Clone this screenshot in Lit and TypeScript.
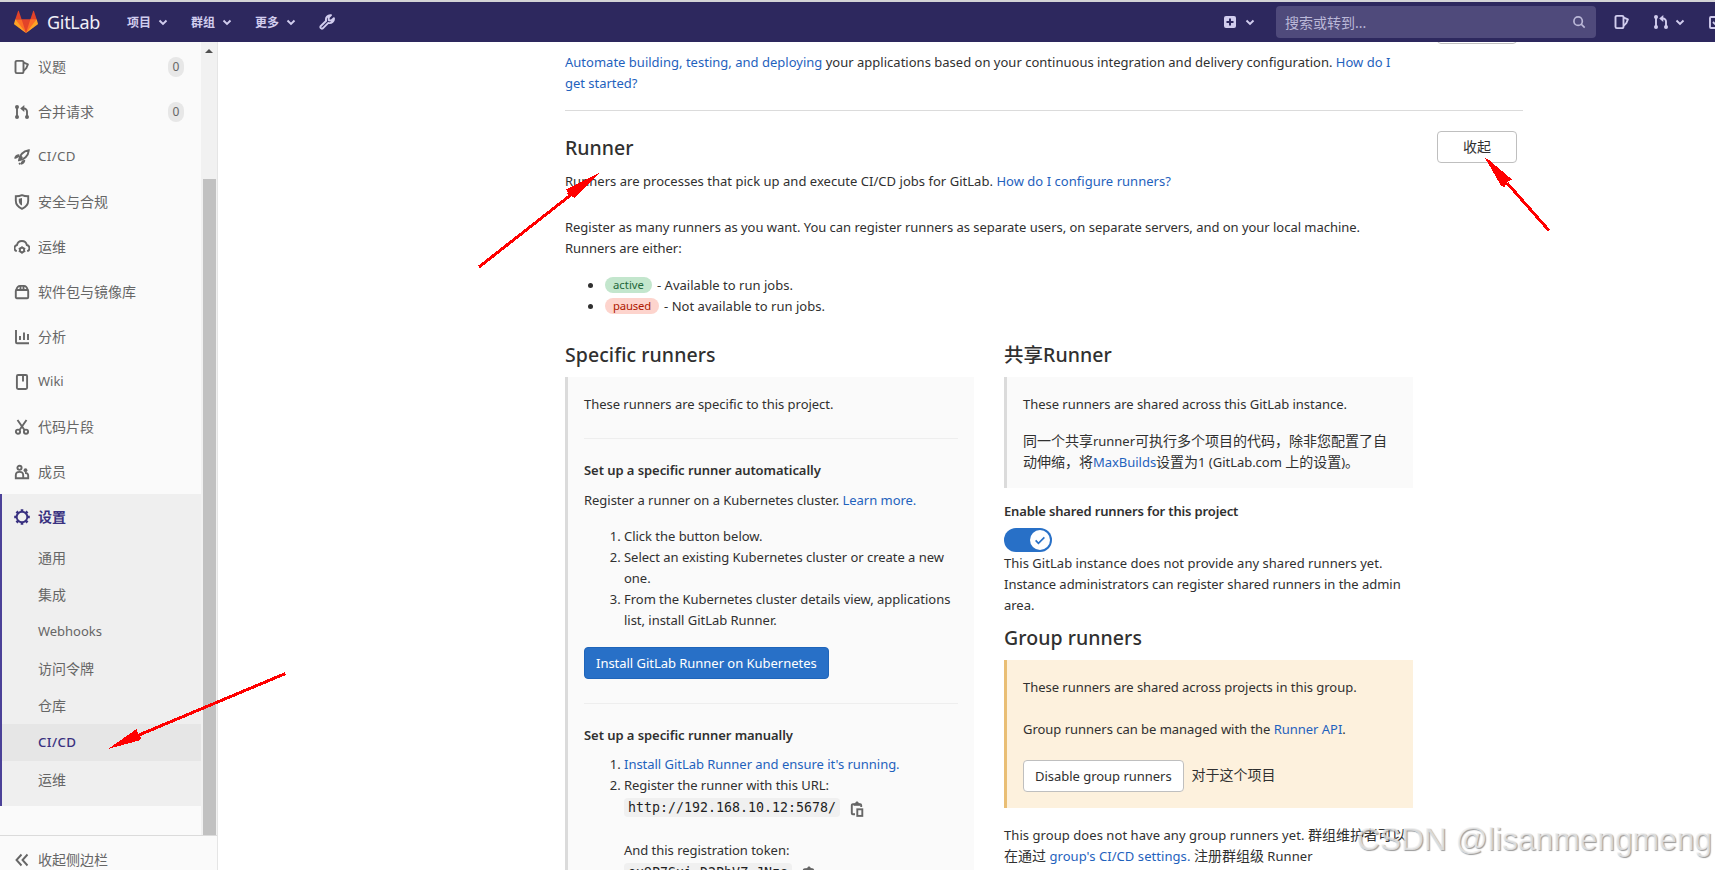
import { LitElement, html, svg, css } from "lit";
import { customElement } from "lit/decorators.js";

const icons: Record<string, unknown> = {
  issues: svg`<path d="M2.800 1.900h5.400a1.300 1.300 0 0 1 1.300 1.300v9.600a1.300 1.300 0 0 1-1.300 1.300H2.800a1.300 1.300 0 0 1-1.300-1.300V3.200a1.300 1.300 0 0 1 1.300-1.300z"/><path d="M9.800 3.600l4.100 1.700-1.600 3.900-2.500 2.500" stroke-linejoin="round"/>`,
  merge: svg`<circle class="f" cx="3" cy="3" r="2"/><circle class="f" cx="3" cy="13" r="2"/><circle class="f" cx="13" cy="13" r="2"/><path d="M3 3v10M13 13V7.500a3 3 0 0 0-3-3H8.500"/><path class="f" d="M10.300 1v7L6.200 4.500z"/>`,
  rocket: svg`<path d="M5 11.200C5.300 6.500 9 2 14.800 1.300 14.300 7 10 10.700 5 11.200zM8.300 7.700l-2.800 3"/><path class="f" d="M5.400 5.300C3 5 .6 6.600.100 9.500l1.700.3L5 8zM8.200 11.500l3-.8c.3 2-1 4.200-4 5l-.6-1.700zM5.500 13.500l1.400 1.200-1 1.200-1.500-1.200z"/>`,
  shield: svg`<path d="M8 1.200c2 .9 4 1.100 6.200 1.100v4.500c0 3.500-2.600 6.400-6.200 8-3.600-1.600-6.200-4.500-6.200-8V2.300C4 2.300 6 2.100 8 1.200z"/><path class="f" d="M8 4v7.600C5.800 10.400 4.800 8.800 4.800 7V4.700z"/>`,
  cloud: svg`<path d="M2.800 12.200A3.200 3.200 0 0 1 3 6a5 5 0 0 1 9.800 0 3.200 3.200 0 0 1 .4 6.200"/><circle cx="8" cy="11" r="2.200"/><path class="t" d="M8 7.300V9M8 13v1.800M4.700 9.200l1.400.8M11.300 9.200l-1.400.8M4.700 12.800l1.400-.8M11.300 12.800l-1.400-.8"/>`,
  box: svg`<rect x="1.800" y="6" width="12.400" height="8.200" rx="1"/><path d="M2.200 6.200C3 3.200 4.500 1.900 6 1.900h4c1.500 0 3 1.300 3.800 4.300M6.500 2v3.500M9.500 2v3.500"/>`,
  chart: svg`<path d="M2 1v12.200a1 1 0 0 0 1 1h12M6 7v4M10 3.500V11M14 5v6"/>`,
  wiki: svg`<rect x="2.900" y="1" width="10.200" height="14" rx="1.200"/><path d="M9 1v6.500"/>`,
  scissors: svg`<path d="M3.500 1l7 10M12.500 1l-7 10"/><circle cx="4" cy="12.700" r="2.100"/><circle cx="12" cy="12.700" r="2.100"/>`,
  users: svg`<circle cx="5.500" cy="3.800" r="2.100"/><path d="M1.800 14.200v-3c0-4.500 7.400-4.500 7.400 0v3zM9.500 14.200h4.700v-2.400c0-2-1.500-3-3.200-2.800"/><circle class="f" cx="11.500" cy="6.200" r="1.900"/>`,
  gear: svg`<circle cx="8" cy="8" r="5.300"/><path class="g" d="M8 .2v2.500M8 13.300v2.500M.2 8h2.500M13.300 8h2.500M2.500 2.500l1.800 1.800M11.700 11.700l1.800 1.800M13.500 2.500l-1.800 1.800M4.300 11.700l-1.800 1.800"/>`,
  collapse: svg`<path d="M7.500 2.500L2.500 8l5 5.500M13.500 2.500L8.500 8l5 5.500"/>`,
  chevron: svg`<path d="M4.500 6.500L8 10l3.500-3.500"/>`,
  wrench: svg`<path d="M12 1.200A4.300 4.300 0 0 0 7.200 6.800L1.600 12.200a1.600 1.600 0 0 0 2.200 2.200L9.300 8.900A4.300 4.300 0 0 0 14.900 4.100L12.300 6.500 9.800 6.200 9.600 3.700z" stroke-linejoin="round"/>`,
  plus: svg`<rect class="f" x="2" y="2" width="12" height="12" rx="2"/><path class="cut" d="M8 4.500v7M4.500 8h7"/>`,
  search: svg`<circle cx="7" cy="7" r="4.800"/><path d="M10.500 10.500l4 4"/>`,
  todo: svg`<path d="M13 8v5a1 1 0 0 1-1 1H3a1 1 0 0 1-1-1V4a1 1 0 0 1 1-1h6M5 8l2.500 2.500L14 4"/>`,
  copy: svg`<path d="M6 13.200H3.800a1 1 0 0 1-1-1V4.200a1 1 0 0 1 1-1h7.400a1 1 0 0 1 1 1V6"/><path class="f" d="M4.800 4.800V2.400h1.400C6.500-.2 9.500-.2 9.800 2.400h1.400v2.400z"/><rect x="8.300" y="8.300" width="5" height="6.600"/>`,
  check: svg`<path d="M3 8.500l3.200 3.200L13 5"/>`,
};
const icon = (n: string) => html`<svg class="ic" viewBox="0 0 16 16">${icons[n]}</svg>`;
const size = (s: string) => (s === "CI/CD" ? "abbr" : /^[\x00-\x7f]+$/.test(s) ? "" : "c");

const nav: [string, string, string?][] = [
  ["issues", "议题", "0"], ["merge", "合并请求", "0"], ["rocket", "CI/CD"], ["shield", "安全与合规"],
  ["cloud", "运维"], ["box", "软件包与镜像库"], ["chart", "分析"], ["wiki", "Wiki"],
  ["scissors", "代码片段"], ["users", "成员"],
];
const sub = ["通用", "集成", "Webhooks", "访问令牌", "仓库", "CI/CD", "运维"];

@customElement("app-root")
export class AppRoot extends LitElement {
  static styles = css`
    :host { display: block; position: relative; width: 1715px; height: 870px; overflow: hidden; background: #fff;
      font: 13px/21px "Noto Sans", "Noto Sans CJK SC", sans-serif; color: #303030; letter-spacing: -.03px; }
    * { box-sizing: border-box; }
    p, h3, h4, h5, ul, ol { margin: 0; padding: 0; font-weight: 400; }
    a { color: #1f62bd; text-decoration: none; }
    .c { font-size: 14px; letter-spacing: 0; }
    .abbr { letter-spacing: .4px; font-size: 13.300px; }
    .ic { width: 16px; height: 16px; flex: none; fill: none; stroke: currentColor; stroke-width: 1.9; display: block; }
    .ic .f { fill: currentColor; stroke: none; }
    .ic .t { stroke-width: 1.3; }
    .ic .g { stroke-width: 2.6; }
    .ic .cut { stroke: #2d285e; stroke-width: 2; }
    .top { height: 42px; border-top: 2px solid #d3d3d6; background: #2d285e; display: flex; align-items: center; color: #d1cdee; padding-left: 14px; }
    .logo { width: 24px; height: 24px; }
    .brand { font-size: 18px; color: #f0eff8; margin-left: 9px; width: 80px; letter-spacing: -.3px; }
    .menu { display: flex; align-items: center; width: 64px; font-size: 12px; font-weight: 700; gap: 4px; }
    .new { display: flex; gap: 4px; width: 54px; }
    .spacer { flex: 1; }
    .search { width: 320px; height: 32px; border-radius: 4px; background: #4f4a7b; display: flex; align-items: center; justify-content: space-between; padding: 0 10px 0 9px; color: #bbb8d8; }
    .search .ic { width: 14px; height: 14px; }
    .right { display: flex; align-items: center; width: 119px; padding-left: 18px; overflow: hidden; }
    .m { margin-left: 23px; } .n { margin-left: 3px; } .o { margin-left: 20px; }
    .body { display: flex; height: 828px; }
    .side { width: 218px; height: 828px; background: #fafafa; border-right: 1px solid #e5e5e5; display: flex; flex-direction: column; color: #666; }
    .scroll { display: flex; height: 793px; }
    .list { width: 201px; padding-top: 2px; }
    .item { height: 45px; display: flex; align-items: center; padding: 0 17px 0 14px; }
    .lbl { margin-left: 8px; flex: 1; white-space: nowrap; }
    .badge { width: 16px; height: 20px; border-radius: 8px; background: #e7e7e7; font-size: 12px; line-height: 20px; text-align: center; }
    .grp { background: #efefef; height: 312px; border-left: 2px solid #4b4198; }
    .grp .item { padding-left: 12px; color: #393180; font-weight: 700; }
    .sub { height: 37px; line-height: 37px; padding-left: 36px; }
    .sub.on { background: #e6e6e6; color: #393180; font-weight: 500; }
    .bar { width: 16px; background: #f1f1f1; display: flex; flex-direction: column; align-items: center; }
    .up { border: 4px solid transparent; border-top: 0; border-bottom: 4px solid #505050; margin-top: 7px; }
    .thumb { width: 13px; margin-top: 126px; flex: 1; background: #c1c1c1; }
    .foot { height: 35px; width: 217px; border-top: 1px solid #dbdbdb; display: flex; align-items: center; gap: 8px; padding: 13px 0 0 14px; }
    .main { margin-left: 347px; width: 958px; height: 828px; overflow: hidden; position: relative; }
    .ln { white-space: nowrap; display: block; height: 21px; padding-top: 1px; line-height: 20px; }
    .ln.k { padding-top: 0; line-height: 21px; }
    .ln.up1 { margin-top: -1px; height: 22px; padding-top: 0; line-height: 21px; }
    .auto { padding-top: 9px; height: 69px; border-bottom: 1px solid #dbdbdb; }
    .auto .ln, .proc, .reg .ln { line-height: 21px; }
    .wide1 { letter-spacing: .01px; }
    .wide2 { letter-spacing: .03px; }
    .wide3 { letter-spacing: .06px; }
    .head { display: flex; justify-content: space-between; padding: 20px 6px 0 0; height: 59px; }
    h4 { font-size: 19.500px; line-height: 24px; height: 24px; font-weight: 500; white-space: nowrap; letter-spacing: .06px; }
    .head h4 { padding-top: 5px; letter-spacing: 0; }
    .btn { border: 1px solid #bfbfbf; border-radius: 4px; background: #fff; height: 32px; line-height: 30px; padding: 0 11px; white-space: nowrap; display: block; width: fit-content; color: #303030; }
    .btn.w80 { width: 80px; text-align: center; padding: 0; }
    .btn.stub { width: 80px; position: absolute; right: 6px; top: -30px; }
    .reg { margin-top: 25px; }
    .tags { margin-top: 16px; list-style: none; letter-spacing: .02px; }
    .tags li { display: flex; align-items: center; height: 21px; padding: 1px 0 0 23px; }
    .dot { width: 5px; height: 5px; border-radius: 50%; background: #303030; margin-right: 12px; }
    .pill { font-size: 11.300px; line-height: 16px; height: 16px; border-radius: 8px; padding: 0 8px; margin-right: 5px; }
    .ok { background: #c3e6cd; color: #24663b; } .no { background: #fdd4cd; color: #ae1800; letter-spacing: -.15px; }
    .cols { display: flex; gap: 30px; margin-top: 27px; }
    .col { width: 409px; }
    .card { margin-top: 10px; background: #fafafa; border-left: 3px solid #dbdbdb; padding: 16px; }
    .c1 { height: 600px; }
    .rule { height: 1px; background: #eee; width: 374px; margin: 24px 0 21px; }
    h5 { font-size: 13px; font-weight: 600; line-height: 21px; white-space: nowrap; letter-spacing: -.06px; }
    .k8 { margin-top: 8px; }
    ol { padding-left: 40px; }
    .o1 { margin: 16px 0; } .o2 { margin-top: 8px; }
    ol .ln { padding-top: 0; line-height: 21px; }
    .blue { background: #2870c7; border-color: #1f65ba; color: #fff; }
    code { font: 13.290px/19px "DejaVu Sans Mono", monospace; letter-spacing: 0; background: #f0f0f0; border-radius: 4px; padding: 0 4px; height: 19px; color: #1f1f1f; white-space: nowrap; }
    .code { display: flex; align-items: center; gap: 9px; color: #666; height: 21px; padding-top: 2px; }
    .tok { margin-top: 23px; }
    .code .ic { margin-top: 2px; }
    .share { margin-top: 16px; }
    .en { margin-top: 13px; letter-spacing: -.15px; }
    .toggle { width: 48px; height: 24px; border-radius: 12px; background: #2870c7; display: flex; justify-content: flex-end; padding: 2px; margin-top: 6px; }
    .knob { width: 20px; height: 20px; border-radius: 50%; background: #fff; color: #2870c7; display: grid; place-items: center; }
    .knob .ic { width: 14px; height: 14px; }
    .gh { margin-top: 11px; }
    .warm { background: #fdf1dd; border-color: #e9be74; height: 148px; }
    .api { margin: 21px 0; }
    .act { display: flex; gap: 8px; }
    .act .c { padding-top: 4px; }
    .none { padding-top: 16px; }
    .over { position: absolute; left: 0; top: 0; width: 1715px; height: 870px; pointer-events: none; }
    .mark { position: absolute; right: 3px; top: 819px; font: 31.750px/40px "Liberation Sans", sans-serif; letter-spacing: 0; color: rgba(238,238,238,.75); text-shadow: 1px 1px 1px rgba(0,0,0,.4); white-space: nowrap; }
  `;

  render() {
    return html`
      <header class="top">
        <svg class="logo" viewBox="0 0 36 36">
          <path fill="#e24329" d="M2 14l9.380 9v-9l-4-12.280c-.205-.632-1.176-.632-1.380 0zM34 14l-9.380 9v-9l4-12.280c.205-.632 1.176-.632 1.380 0zM18 34.380L3 14h30z"/>
          <path fill="#fc6d26" d="M18 34.380L11.380 14H2l4 11zM18 34.380L24.620 14H34l-4 11z"/>
          <path fill="#fca326" d="M2 14L.1 20.160c-.18.565 0 1.200.5 1.560l17.420 12.660zM34 14l1.900 6.160c.18.565 0 1.200-.5 1.560L18 34.380z"/>
        </svg>
        <span class="brand">GitLab</span>
        <span class="menu">项目${icon("chevron")}</span><span class="menu">群组${icon("chevron")}</span><span class="menu">更多${icon("chevron")}</span>
        ${icon("wrench")}
        <span class="spacer"></span>
        <span class="new">${icon("plus")}${icon("chevron")}</span>
        <div class="search"><span class="c">搜索或转到...</span>${icon("search")}</div>
        <div class="right">${icon("issues")}<span class="m">${icon("merge")}</span><span class="n">${icon("chevron")}</span><span class="o">${icon("todo")}</span></div>
      </header>
      <div class="body">
        <nav class="side">
          <div class="scroll">
            <div class="list">
              ${nav.map(([i, l, b]) => html`<div class="item">${icon(i)}<span class="lbl ${size(l)}">${l}</span>${b ? html`<span class="badge">${b}</span>` : ""}</div>`)}
              <div class="grp">
                <div class="item">${icon("gear")}<span class="lbl c">设置</span></div>
                ${sub.map((s) => html`<div class="sub ${size(s)} ${s === "CI/CD" ? "on" : ""}">${s}</div>`)}
              </div>
            </div>
            <div class="bar"><span class="up"></span><span class="thumb"></span></div>
          </div>
          <div class="foot">${icon("collapse")}<span class="c">收起侧边栏</span></div>
        </nav>
        <main class="main">
          <span class="btn stub"></span>
          <div class="auto">
            <span class="ln wide1"><a>Automate building, testing, and deploying</a> your applications based on your continuous integration and delivery configuration. <a>How do I</a></span>
            <a class="ln">get started?</a>
          </div>
          <div class="head"><h4>Runner</h4><span class="btn w80 c">收起</span></div>
          <p class="ln proc wide2">Runners are processes that pick up and execute CI/CD jobs for GitLab. <a>How do I configure runners?</a></p>
          <p class="reg"><span class="ln">Register as many runners as you want. You can register runners as separate users, on separate servers, and on your local machine.</span><span class="ln">Runners are either:</span></p>
          <ul class="tags">
            <li><span class="dot"></span><span class="pill ok">active</span>- Available to run jobs.</li>
            <li><span class="dot"></span><span class="pill no">paused</span>- Not available to run jobs.</li>
          </ul>
          <div class="cols">
            <div class="col"><h4>Specific runners</h4>
              <div class="card c1">
                <p class="ln">These runners are specific to this project.</p>
                <div class="rule"></div>
                <h5>Set up a specific runner automatically</h5>
                <p class="ln k8">Register a runner on a Kubernetes cluster. <a>Learn more.</a></p>
                <ol class="o1">
                  <li>Click the button below.</li>
                  <li><span class="ln">Select an existing Kubernetes cluster or create a new</span><span class="ln">one.</span></li>
                  <li><span class="ln">From the Kubernetes cluster details view, applications</span><span class="ln">list, install GitLab Runner.</span></li>
                </ol>
                <span class="btn blue">Install GitLab Runner on Kubernetes</span>
                <div class="rule"></div>
                <h5>Set up a specific runner manually</h5>
                <ol class="o2">
                  <li><a>Install GitLab Runner and ensure it's running.</a></li>
                  <li><span class="ln">Register the runner with this URL:</span>
                    <div class="code"><code>http://192.168.10.12:5678/</code>${icon("copy")}</div>
                    <span class="ln tok">And this registration token:</span>
                    <div class="code"><code>ex9P7Sxi-D2PhVZ_JNzs</code>${icon("copy")}</div>
                  </li>
                </ol>
              </div>
            </div>
            <div class="col"><h4>共享Runner</h4>
              <div class="card">
                <span class="ln">These runners are shared across this GitLab instance.</span>
                <span class="ln k share"><span class="c">同一个共享</span>runner<span class="c">可执行多个项目的代码，除非您配置了自</span></span>
                <span class="ln k"><span class="c">动伸缩，将</span><a>MaxBuilds</a><span class="c">设置为</span>1 (GitLab.com <span class="c">上的设置</span>)<span class="c">。</span></span>
              </div>
              <h5 class="en">Enable shared runners for this project</h5>
              <div class="toggle"><span class="knob">${icon("check")}</span></div>
              <span class="ln wide2">This GitLab instance does not provide any shared runners yet.</span>
              <span class="ln">Instance administrators can register shared runners in the admin</span>
              <span class="ln">area.</span>
              <h4 class="gh">Group runners</h4>
              <div class="card warm">
                <span class="ln">These runners are shared across projects in this group.</span>
                <span class="ln api">Group runners can be managed with the <a>Runner API</a>.</span>
                <div class="act"><span class="btn">Disable group runners</span><span class="c">对于这个项目</span></div>
              </div>
              <div class="none">
                <span class="ln k wide3">This group does not have any group runners yet. <span class="c">群组维护者可以</span></span>
                <span class="ln k wide3"><span class="c">在通过</span> <a>group's CI/CD settings.</a> <span class="c">注册群组级</span> Runner</span>
              </div>
            </div>
          </div>
        </main>
      </div>
      <div class="mark">CSDN @lisanmengmeng</div>
      <svg class="over" viewBox="0 0 1715 870" fill="#f00" stroke="#f00" stroke-width="3" shape-rendering="crispEdges">
        <path d="M479 267L572 194M1549 230.500L1507 183M285.500 673.500L139 735"/>
        <path stroke="none" d="M599 173l-33 16.500 2 3.500-1.500 1 8 4zM1485 158l4 2 23 19.500-4 2-4 6-3-2zM108 749l28.500-20 1 3 3.500 6-2 2.500z"/>
      </svg>
    `;
  }
}
